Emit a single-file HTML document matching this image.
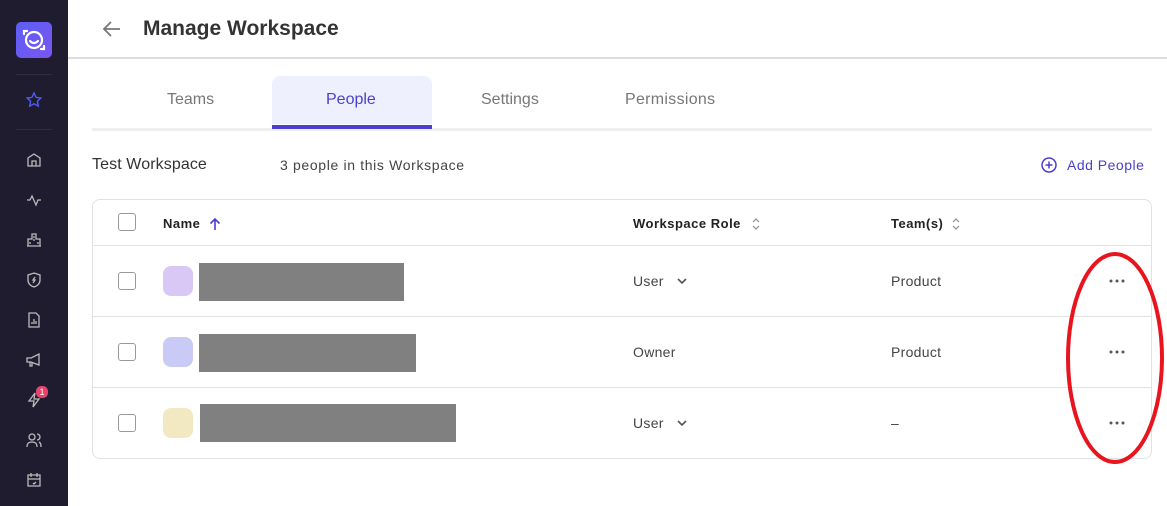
<!DOCTYPE html>
<html><head><style>
body{margin:0;width:1167px;height:506px;overflow:hidden;background:#fff;font-family:"Liberation Sans",sans-serif;position:relative}
.a{position:absolute}
.sb{left:0;top:0;width:68px;height:506px;background:#1e1c2e}
.ic{position:absolute;left:24px;width:20px;height:20px}
.cb{position:absolute;left:118px;width:18px;height:18px;border:1.5px solid #999;border-radius:3px;box-sizing:border-box}
.t{font-size:14px;color:#444;letter-spacing:0.3px}
.h{font-size:13px;font-weight:bold;color:#222;letter-spacing:0.5px}
.row{position:absolute;left:93px;width:1058px;border-top:1px solid #e2e2e2}
.dots{position:absolute;left:1108px}
</style></head><body>
<div class="a sb"></div>
<div class="a" style="left:16px;top:22px;width:36px;height:36px;border-radius:5px;background:linear-gradient(135deg,#5c5ff6,#7a55f0)">
<svg width="36" height="36" viewBox="0 0 36 36" fill="none" stroke="#fff" stroke-width="2.2" stroke-linecap="round"><circle cx="18" cy="18" r="8"/><path d="M14 19q4 4 8 0"/><path d="M8 12V9h3M28 24v3h-3"/></svg></div>
<div class="a" style="left:16px;top:74px;width:36px;height:1px;background:#2f2c44"></div>
<div class="a" style="left:16px;top:129px;width:36px;height:1px;background:#2f2c44"></div>
<svg class="ic" style="top:90px" viewBox="0 0 20 20" fill="none" stroke="#4f5cf5" stroke-width="1.4"><path d="M10 3l2.1 4.4 4.8.6-3.5 3.3.9 4.8L10 13.8l-4.3 2.3.9-4.8L3.1 8l4.8-.6z"/></svg>
<svg class="ic" style="top:150px" viewBox="0 0 20 20" fill="none" stroke="#bbb" stroke-width="1.3"><path d="M4 16V8l6-4 6 4v8zM8 16v-5h4v5"/></svg>
<svg class="ic" style="top:190px" viewBox="0 0 20 20" fill="none" stroke="#bbb" stroke-width="1.3"><path d="M3 10h3l2-4 4 9 2-5h3"/></svg>
<svg class="ic" style="top:230px" viewBox="0 0 20 20" fill="none" stroke="#bbb" stroke-width="1.3"><path d="M3 16h14M4 16V9h4V4h4v5h4v7M9 7h2M9 10h2M6 12v2M14 12v2"/></svg>
<svg class="ic" style="top:270px" viewBox="0 0 20 20" fill="none" stroke="#bbb" stroke-width="1.3"><path d="M10 3l6 2v5c0 4-3 6-6 7-3-1-6-3-6-7V5z"/><path d="M11 7l-2 3h2l-2 3"/></svg>
<svg class="ic" style="top:310px" viewBox="0 0 20 20" fill="none" stroke="#bbb" stroke-width="1.3"><path d="M5 3h7l3 3v11H5zM8 14v-2M10 14V9M12 14v-3"/></svg>
<svg class="ic" style="top:350px" viewBox="0 0 20 20" fill="none" stroke="#bbb" stroke-width="1.3"><path d="M3 8h4l8-4v11l-8-3H3zM6 12v4h2v-4"/></svg>
<svg class="ic" style="top:390px" viewBox="0 0 20 20" fill="none" stroke="#bbb" stroke-width="1.3"><path d="M11 3L5 11h5l-1 6 6-8h-5z"/></svg>
<div class="a" style="left:36px;top:386px;width:12px;height:12px;border-radius:5px;background:#e8436a;color:#fff;font-size:9px;text-align:center;line-height:12px">1</div>
<svg class="ic" style="top:430px" viewBox="0 0 20 20" fill="none" stroke="#bbb" stroke-width="1.3"><circle cx="8" cy="7" r="3"/><path d="M3 17c0-4 2-5 5-5s5 1 5 5M13 4a3 3 0 010 6M15 12c2 1 2 3 2 5"/></svg>
<svg class="ic" style="top:470px" viewBox="0 0 20 20" fill="none" stroke="#bbb" stroke-width="1.3"><path d="M4 5h12v11H4zM4 9h12M7 3v4M13 3v4M9 13l1 1 2-2"/></svg>

<svg class="a" style="left:102px;top:20px" width="20" height="18" viewBox="0 0 20 18" fill="none" stroke="#777" stroke-width="1.8"><path d="M18 9H3M9 2L2 9l7 7"/></svg>
<div class="a" style="left:143px;top:17px;font-size:21px;font-weight:bold;color:#333">Manage Workspace</div>
<div class="a" style="left:68px;top:57px;width:1099px;height:2px;background:#ddd"></div>

<div class="a" style="left:92px;top:128px;width:1060px;height:3px;background:#eee"></div>
<div class="a" style="left:272px;top:76px;width:160px;height:48px;background:#eff0fd;border-radius:8px 8px 0 0"></div>
<div class="a" style="left:272px;top:125px;width:160px;height:4px;background:#4b3fcf"></div>
<div class="a" style="left:167px;top:91px;font-size:16px;color:#777">Teams</div>
<div class="a" style="left:326px;top:91px;font-size:16px;color:#4b3fcf">People</div>
<div class="a" style="left:481px;top:91px;font-size:16px;color:#777">Settings</div>
<div class="a" style="left:625px;top:91px;font-size:16px;color:#777;letter-spacing:0.3px">Permissions</div>

<div class="a" style="left:92px;top:156px;font-size:16px;color:#333;letter-spacing:0.1px">Test Workspace</div>
<div class="a t" style="left:280px;top:157px;letter-spacing:0.65px">3 people in this Workspace</div>
<svg class="a" style="left:1041px;top:157px" width="16" height="16" viewBox="0 0 16 16" fill="none" stroke="#4b3fcf" stroke-width="1.5"><circle cx="8" cy="8" r="7"/><path d="M8 4.5v7M4.5 8h7"/></svg>
<div class="a" style="left:1067px;top:157px;font-size:14px;color:#4b3fcf;letter-spacing:0.5px">Add People</div>

<div class="a" style="left:92px;top:199px;width:1060px;height:260px;border:1px solid #e2e2e2;border-radius:8px;box-sizing:border-box"></div>
<div class="cb" style="top:213px"></div>
<div class="a h" style="left:163px;top:216px">Name</div>
<svg class="a" style="left:209px;top:217px" width="12" height="14" viewBox="0 0 12 14" fill="none" stroke="#4b3fcf" stroke-width="1.6"><path d="M6 13V2M1.5 6.5L6 2l4.5 4.5"/></svg>
<div class="a h" style="left:633px;top:216px">Workspace Role</div>
<div class="a h" style="left:891px;top:216px">Team(s)</div>
<svg class="a" style="left:751px;top:216px" width="10" height="16" viewBox="0 0 10 16" fill="none" stroke="#999" stroke-width="1.3"><path d="M2 6l3-3 3 3M2 10l3 3 3-3"/></svg>
<svg class="a" style="left:951px;top:216px" width="10" height="16" viewBox="0 0 10 16" fill="none" stroke="#999" stroke-width="1.3"><path d="M2 6l3-3 3 3M2 10l3 3 3-3"/></svg>

<div class="row" style="top:245px"></div>
<div class="row" style="top:316px"></div>
<div class="row" style="top:387px"></div>

<div class="cb" style="top:272px"></div>
<div class="a" style="left:163px;top:266px;width:30px;height:30px;border-radius:8px;background:#d9c8f5"></div>
<div class="a" style="left:199px;top:263px;width:205px;height:38px;background:#808080"></div>
<div class="a t" style="left:633px;top:273px">User</div>
<svg class="a" style="left:676px;top:276px" width="12" height="10" viewBox="0 0 12 10" fill="none" stroke="#555" stroke-width="1.6"><path d="M2 3l4 4 4-4"/></svg>
<div class="a t" style="left:891px;top:273px">Product</div>
<svg class="dots" style="top:277px" width="18" height="8"><circle cx="3" cy="4" r="1.5" fill="#555"/><circle cx="9" cy="4" r="1.5" fill="#555"/><circle cx="15" cy="4" r="1.5" fill="#555"/></svg>

<div class="cb" style="top:343px"></div>
<div class="a" style="left:163px;top:337px;width:30px;height:30px;border-radius:8px;background:#c9cbf6"></div>
<div class="a" style="left:199px;top:334px;width:217px;height:38px;background:#808080"></div>
<div class="a t" style="left:633px;top:344px">Owner</div>
<div class="a t" style="left:891px;top:344px">Product</div>
<svg class="dots" style="top:348px" width="18" height="8"><circle cx="3" cy="4" r="1.5" fill="#555"/><circle cx="9" cy="4" r="1.5" fill="#555"/><circle cx="15" cy="4" r="1.5" fill="#555"/></svg>

<div class="cb" style="top:414px"></div>
<div class="a" style="left:163px;top:408px;width:30px;height:30px;border-radius:8px;background:#f2e9c3"></div>
<div class="a" style="left:200px;top:404px;width:256px;height:38px;background:#808080"></div>
<div class="a t" style="left:633px;top:415px">User</div>
<svg class="a" style="left:676px;top:418px" width="12" height="10" viewBox="0 0 12 10" fill="none" stroke="#555" stroke-width="1.6"><path d="M2 3l4 4 4-4"/></svg>
<div class="a t" style="left:891px;top:415px">–</div>
<svg class="dots" style="top:419px" width="18" height="8"><circle cx="3" cy="4" r="1.5" fill="#555"/><circle cx="9" cy="4" r="1.5" fill="#555"/><circle cx="15" cy="4" r="1.5" fill="#555"/></svg>

<svg class="a" style="left:1060px;top:250px" width="107" height="220" viewBox="0 0 107 220"><ellipse cx="55" cy="108" rx="47" ry="104" fill="none" stroke="#e8141e" stroke-width="4"/></svg>
</body></html>
